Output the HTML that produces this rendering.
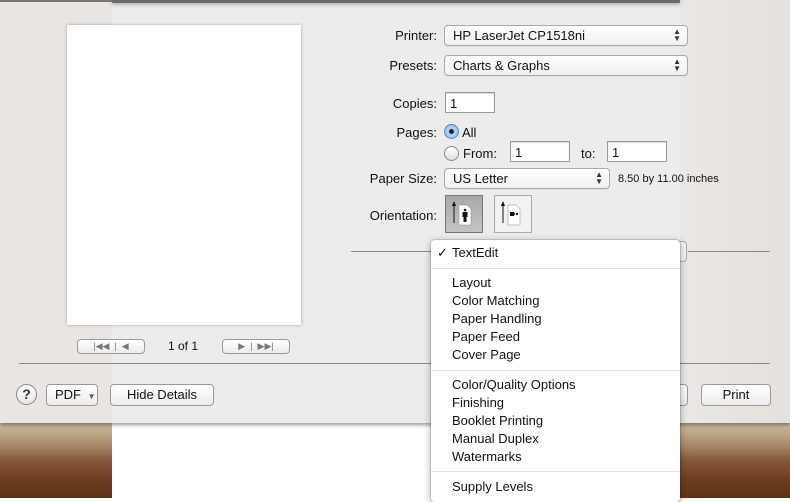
<!DOCTYPE html>
<html><head><style>
*{margin:0;padding:0;box-sizing:border-box}
body{width:790px;height:498px;position:relative;overflow:hidden;font-family:"Liberation Sans",sans-serif;font-size:13px;color:#111;background:#fff}
.a{position:absolute}
.lbl{position:absolute;text-align:right;width:140px;font-size:13px}
.pop{position:absolute;height:21px;border:1px solid #a9a9a9;border-radius:4px;background:linear-gradient(#fff,#f0f0f0);padding:2px 8px;font-size:13px;box-shadow:0 1px 0 rgba(0,0,0,.05)}
.pop .ar{position:absolute;right:6px;top:2px;font-size:8px;line-height:7px;color:#333}
.tf{position:absolute;height:21px;border:1px solid #9a9a9a;background:#fff;padding:3px 4px;font-size:13px;line-height:15px;box-shadow:inset 0 1px 1px rgba(0,0,0,.15)}
.btn{position:absolute;height:22px;border:1px solid #9a9a9a;border-radius:4px;background:linear-gradient(#fff,#ececec);text-align:center;font-size:13px;line-height:20px}
.rad{position:absolute;width:15px;height:15px;border-radius:50%;border:1px solid #8a8a8a;background:linear-gradient(#fff,#ddd)}
.mi{position:absolute;left:21px;font-size:13px}
.sep{position:absolute;left:0;right:0;height:1px;background:#e2e2e2}
</style></head><body>
<div class="a" style="left:0;top:420px;width:790px;height:78px;background:linear-gradient(#d2c2ac 0px,#c0a98c 12px,#a88868 26px,#875a38 40px,#6e3f22 58px,#5e3219 78px)"></div>
<div class="a" style="left:112px;top:420px;width:568px;height:78px;background:#fff"></div>
<div class="a" style="left:0;top:0;width:790px;height:423px;background:#e8e5e2;box-shadow:0 2px 4px rgba(0,0,0,.4)"></div>
<div class="a" style="left:112px;top:0;width:568px;height:423px;background:#ececec"></div>
<div class="a" style="left:680px;top:0;width:110px;height:423px;background:linear-gradient(90deg,#eae8e5,#e4e0dc)"></div>
<div class="a" style="left:112px;top:0;width:568px;height:3px;background:#6a6a6a;box-shadow:0 1px 4px rgba(0,0,0,.4)"></div>
<div class="a" style="left:0;top:0;width:112px;height:2px;background:#7a7470"></div>
<div class="a" style="left:67px;top:25px;width:234px;height:300px;background:#fff;box-shadow:0 0 3px rgba(0,0,0,.3)"></div>
<div class="btn" style="left:77px;top:339px;width:68px;height:15px;font-size:9px;line-height:12px;color:#777">|◀◀ &nbsp;|&nbsp; ◀</div>
<div class="a" style="left:168px;top:339px;font-size:12px">1 of 1</div>
<div class="btn" style="left:222px;top:339px;width:68px;height:15px;font-size:9px;line-height:12px;color:#777">▶ &nbsp;|&nbsp; ▶▶|</div>
<div class="a" style="left:19px;top:363px;width:751px;height:1px;background:#8a8a8a"></div>
<div class="a" style="left:16px;top:384px;width:21px;height:21px;border-radius:50%;border:1px solid #888;background:linear-gradient(#fff,#e6e6e6);text-align:center;font-weight:bold;font-size:14px;line-height:19px;color:#333">?</div>
<div class="btn" style="left:46px;top:384px;width:52px;text-align:left;padding-left:8px">PDF <span style="font-size:8px;color:#555;margin-left:3px">▼</span></div>
<div class="btn" style="left:110px;top:384px;width:104px">Hide Details</div>
<div class="btn" style="left:660px;top:384px;width:28px"></div>
<div class="btn" style="left:701px;top:384px;width:70px">Print</div>
<div class="lbl" style="left:297px;top:28px">Printer:</div>
<div class="pop" style="left:444px;top:25px;width:244px">HP LaserJet CP1518ni<span class="ar">▲<br>▼</span></div>
<div class="lbl" style="left:297px;top:58px">Presets:</div>
<div class="pop" style="left:444px;top:55px;width:244px">Charts &amp; Graphs<span class="ar">▲<br>▼</span></div>
<div class="lbl" style="left:297px;top:96px">Copies:</div>
<div class="tf" style="left:445px;top:92px;width:50px">1</div>
<div class="lbl" style="left:297px;top:125px">Pages:</div>
<div class="rad" style="left:444px;top:124px;border-color:#5a86c0;background:radial-gradient(circle,#222 2px,#bcd6f4 3px,#7fb0e8)"></div>
<div class="a" style="left:462px;top:125px">All</div>
<div class="rad" style="left:444px;top:146px"></div>
<div class="a" style="left:463px;top:146px">From:</div>
<div class="tf" style="left:510px;top:141px;width:60px">1</div>
<div class="a" style="left:581px;top:146px">to:</div>
<div class="tf" style="left:607px;top:141px;width:60px">1</div>
<div class="lbl" style="left:297px;top:171px">Paper Size:</div>
<div class="pop" style="left:444px;top:168px;width:166px">US Letter<span class="ar">▲<br>▼</span></div>
<div class="a" style="left:618px;top:173px;font-size:11px">8.50 by 11.00 inches</div>
<div class="lbl" style="left:297px;top:208px">Orientation:</div>
<div class="a" style="left:445px;top:195px;width:38px;height:38px;border:1px solid #777;background:linear-gradient(#a8a8a8,#c4c4c4)">
 <svg width="36" height="36" viewBox="0 0 36 36"><path d="M8 5l-2 5h1.5v17h1v-17h1.5z" fill="#111"/><path d="M13 9h8l4 4v16h-12z" fill="#fff" stroke="#888" stroke-width=".5"/><circle cx="19" cy="14" r="1.3" fill="#111"/><path d="M16.5 16h5v5h-1v5h-3v-5h-1z" fill="#111"/></svg></div>
<div class="a" style="left:494px;top:195px;width:38px;height:38px;border:1px solid #aaa;background:#f2f2f2">
 <svg width="36" height="36" viewBox="0 0 36 36"><path d="M8 5l-2 5h1.5v17h1v-17h1.5z" fill="#111"/><path d="M13 9h8l4 4v16h-12z" fill="#fff" stroke="#888" stroke-width=".5"/><path d="M15 16h4l1 2-1 2h-4z" fill="#111"/><circle cx="22" cy="18" r="1.2" fill="#111"/></svg></div>
<div class="a" style="left:351px;top:251px;width:82px;height:1px;background:#8a8a8a"></div>
<div class="a" style="left:688px;top:251px;width:82px;height:1px;background:#8a8a8a"></div>
<div class="a" style="left:670px;top:241px;width:17px;height:21px;border:1px solid #aaa;border-radius:4px;background:#f4f4f4"></div>
<div class="a" style="left:431px;top:240px;width:249px;height:262px;background:#fff;border-radius:4px;box-shadow:0 2px 8px rgba(0,0,0,.35),0 0 0 1px rgba(0,0,0,.12)">
 <div class="a" style="left:6px;top:5px">✓</div>
 <div class="mi" style="top:5px">TextEdit</div>
 <div class="sep" style="top:28px"></div>
 <div class="mi" style="top:35px">Layout</div>
 <div class="mi" style="top:53px">Color Matching</div>
 <div class="mi" style="top:71px">Paper Handling</div>
 <div class="mi" style="top:89px">Paper Feed</div>
 <div class="mi" style="top:107px">Cover Page</div>
 <div class="sep" style="top:130px"></div>
 <div class="mi" style="top:137px">Color/Quality Options</div>
 <div class="mi" style="top:155px">Finishing</div>
 <div class="mi" style="top:173px">Booklet Printing</div>
 <div class="mi" style="top:191px">Manual Duplex</div>
 <div class="mi" style="top:209px">Watermarks</div>
 <div class="sep" style="top:231px"></div>
 <div class="mi" style="top:239px">Supply Levels</div>
</div>
</body></html>
